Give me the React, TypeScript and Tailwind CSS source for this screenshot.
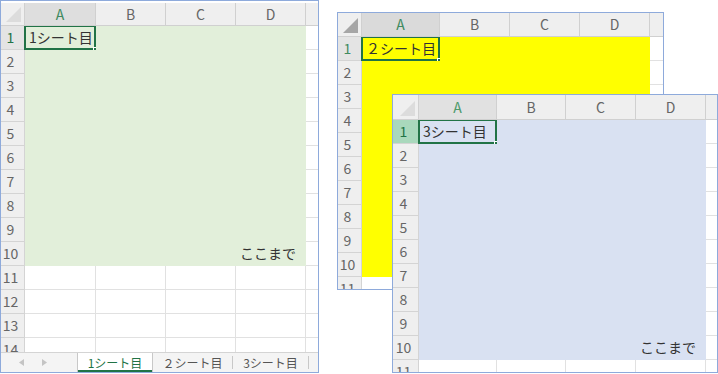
const jp = "[font-family:'Noto_Sans_CJK_JP','Noto_Sans',sans-serif]";

const letters = ['A', 'B', 'C', 'D'];

interface SheetProps {
  frame: string;
  cols: string;
  headH: string;
  rowCount: number;
  fill: string;
  label: string;
  corner: string;
  rowHeadActive: string;
  colHeadActive: string;
  showEnd?: boolean;
  tabs?: boolean;
}

function Corner({ color }: { color: string }) {
  return (
    <svg width="15" height="15" viewBox="0 0 15 15" className="absolute right-[3px] bottom-[3px]">
      <polygon points="15,0 15,15 0,15" fill={color} />
    </svg>
  );
}

function TabBar() {
  return (
    <div className={`flex h-[20px] shrink-0 items-stretch border-t border-[#d4d4d4] bg-[#f4f4f4] text-[12px] text-[#555] ${jp}`}>
      <div className="flex w-[76px] items-center gap-[18px] pl-[18px]">
        <svg width="5" height="7" viewBox="0 0 5 7">
          <polygon points="5,0 5,7 0,3.5" fill="#c4c4c4" />
        </svg>
        <svg width="5" height="7" viewBox="0 0 5 7">
          <polygon points="0,0 0,7 5,3.5" fill="#c4c4c4" />
        </svg>
      </div>
      <div className="relative flex w-[76px] items-center justify-center border-x border-[#c8c8c8] bg-white text-[#217346]">
        1シート目
        <div className="absolute right-0 bottom-0 left-0 h-[2px] bg-[#217346]" />
      </div>
      <div className="flex w-[80px] items-center">
        <span className="flex-1 text-center">２シート目</span>
        <span className="h-[13px] w-px bg-[#c8c8c8]" />
      </div>
      <div className="flex w-[76px] items-center">
        <span className="flex-1 text-center">3シート目</span>
        <span className="h-[13px] w-px bg-[#c8c8c8]" />
      </div>
    </div>
  );
}

function Sheet({
  frame,
  cols,
  headH,
  rowCount,
  fill,
  label,
  corner,
  rowHeadActive,
  colHeadActive,
  showEnd = true,
  tabs = false,
}: SheetProps) {
  const rows = Array.from({ length: rowCount }, (_, i) => i + 1);

  return (
    <div className={`absolute flex flex-col overflow-hidden border border-[#8eaadb] bg-white ${jp} ${frame}`}>
      {/* column headers */}
      <div className={`grid shrink-0 ${cols} ${headH}`}>
        <div className="relative border-r border-b border-[#d0d0d0] bg-[#efefef]">
          <Corner color={corner} />
        </div>
        {letters.map((l, i) => (
          <div
            key={l}
            className={`flex items-center justify-center border-r border-b border-[#d0d0d0] text-[14px] ${
              i === 0 ? colHeadActive : 'bg-[#efefef] text-[#666]'
            }`}
          >
            {l}
          </div>
        ))}
        <div className="border-b border-[#d0d0d0] bg-[#efefef]" />
      </div>

      {/* rows */}
      <div className="flex min-h-0 flex-1 flex-col overflow-hidden">
        {rows.map((r) => {
          const filled = r <= 10;
          const cell = filled ? `${fill} border-transparent` : 'bg-white border-[#e1e1e1]';
          return (
            <div key={r} className={`grid h-[24px] shrink-0 ${cols}`}>
              <div
                className={`flex items-center justify-center border-r border-b border-[#d4d4d4] pr-[4px] text-[14px] ${
                  r === 1 ? rowHeadActive : 'bg-[#efefef] text-[#666]'
                }`}
              >
                {r}
              </div>
              {letters.map((l) => (
                <div key={l} className={`relative flex items-center border-r border-b ${cell}`}>
                  {r === 1 && l === 'A' && (
                    <>
                      <span className="pl-[4px] text-[14px] whitespace-nowrap text-[#333]">{label}</span>
                      <div className="absolute -top-[1px] -right-[1px] -bottom-[1px] -left-[1px] border-2 border-[#217346]" />
                      <div className="absolute -right-[3px] -bottom-[3px] h-[5px] w-[5px] border border-white bg-[#217346]" />
                    </>
                  )}
                  {r === 10 && l === 'D' && showEnd && (
                    <span className="ml-auto pr-[9px] text-[14px] whitespace-nowrap text-[#333]">ここまで</span>
                  )}
                </div>
              ))}
              <div className="border-b border-[#e1e1e1] bg-white" />
            </div>
          );
        })}
      </div>

      {tabs && <TabBar />}
    </div>
  );
}

export default function App() {
  return (
    <div className="relative h-[374px] w-[718px] overflow-hidden bg-white">
      <Sheet
        frame="left-0 top-0 w-[319px] h-[373px] pt-[2px]"
        cols="grid-cols-[24px_71px_70px_70px_70px_1fr]"
        headH="h-[23px]"
        rowCount={14}
        fill="bg-[#e2efda]"
        label="1シート目"
        corner="#dcdcdc"
        rowHeadActive="bg-[#e4e4e4] text-[#217346]"
        colHeadActive="bg-[#dedede] text-[#3f8a5f]"
        tabs
      />
      <Sheet
        frame="left-[337px] top-[12px] w-[327px] h-[278px]"
        cols="grid-cols-[24px_78px_70px_70px_70px_1fr]"
        headH="h-[24px]"
        rowCount={11}
        fill="bg-[#ffff00]"
        label="２シート目"
        corner="#a6a6a6"
        rowHeadActive="bg-[#e4e4e4] text-[#3f8a5f]"
        colHeadActive="bg-[#dadada] text-[#3f8a5f]"
        showEnd={false}
      />
      <Sheet
        frame="left-[392px] top-[94px] w-[326px] h-[279px]"
        cols="grid-cols-[26px_78px_69px_70px_70px_1fr]"
        headH="h-[25px]"
        rowCount={11}
        fill="bg-[#d9e1f2]"
        label="3シート目"
        corner="#dcdcdc"
        rowHeadActive="bg-[#a9d8bc] text-[#217346]"
        colHeadActive="bg-[#e1e1e1] text-[#4d9a6c]"
      />
    </div>
  );
}
